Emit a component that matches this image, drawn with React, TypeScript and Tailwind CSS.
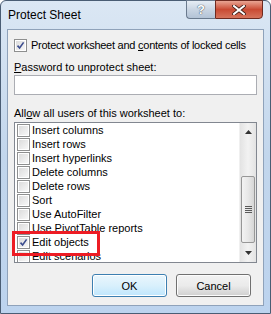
import React from 'react';

const items = [
  { label: 'Insert columns', checked: false },
  { label: 'Insert rows', checked: false },
  { label: 'Insert hyperlinks', checked: false },
  { label: 'Delete columns', checked: false },
  { label: 'Delete rows', checked: false },
  { label: 'Sort', checked: false },
  { label: 'Use AutoFilter', checked: false },
  { label: 'Use PivotTable reports', checked: false },
  { label: 'Edit objects', checked: true },
  { label: 'Edit scenarios', checked: false },
];

const CheckBox = ({ checked }: { checked: boolean }) => (
  <div className="w-[13px] h-[13px] shrink-0 border border-[#8e8f8f] bg-white p-[1px]">
    <div className="w-full h-full bg-gradient-to-br from-[#dcdcdc] to-[#f7f7f7] relative">
      {checked && (
        <svg viewBox="0 0 9 9" className="absolute inset-0 w-full h-full">
          <path d="M1.5 4.6 L3.6 7 L7.6 1.4" fill="none" stroke="#3b4c8e" strokeWidth="1.6" />
        </svg>
      )}
    </div>
  </div>
);

export default function App() {
  return (
    <div
      className="w-[271px] h-[314px] relative flex flex-col rounded-t-[6px] border border-[#4a5d74] bg-gradient-to-b from-[#dbe7f4] via-[#c2d6ec] to-[#bcd3ee] text-black"
      style={{ fontFamily: '"Liberation Sans", Arial, sans-serif' }}
    >
      {/* Title bar */}
      <div className="h-[28px] shrink-0 flex items-start justify-between pl-[7px] pr-[7px]">
        <span className="mt-[6px] text-[12px] leading-[16px]">Protect Sheet</span>
        <div className="flex -mt-[1px]">
          <div className="w-[29px] h-[19px] rounded-bl-[4px] border border-[#6a7a8e] border-r-0 bg-gradient-to-b from-[#e6edf5] via-[#c9d5e3] to-[#b3c3d6] flex items-center justify-center">
            <span className="text-[13px] font-bold text-white leading-none" style={{ textShadow: '0 0 1px #3d4b5c, 0 0 1px #3d4b5c' }}>?</span>
          </div>
          <div className="w-[48px] h-[19px] rounded-br-[4px] border border-[#6e2a20] bg-gradient-to-b from-[#e8a493] via-[#c94a33] to-[#d5735c] flex items-center justify-center">
            <svg viewBox="0 0 14 10" className="w-[14px] h-[10px]">
              <path d="M2 1 L12 9 M12 1 L2 9" stroke="#3a1a14" strokeWidth="3.6" strokeLinecap="square" />
              <path d="M2 1 L12 9 M12 1 L2 9" stroke="#ffffff" strokeWidth="2" strokeLinecap="square" />
            </svg>
          </div>
        </div>
      </div>

      {/* Client area */}
      <div className="flex-1 min-h-0 mx-[6px] mb-[7px] border border-[#8fa2ba] bg-[#f0f0f0] pt-[8px] px-[6px] flex flex-col text-[11px] leading-[14px]">
        <label className="flex items-center gap-[3px] whitespace-nowrap">
          <CheckBox checked />
          <span className="ml-[1px] tracking-[-0.25px]">
            Protect worksheet and <u>c</u>ontents of locked cells
          </span>
        </label>

        <div className="mt-[8px]">
          <u>P</u>assword to unprotect sheet:
        </div>
        <div className="mt-[1px] h-[20px] w-[243px] shrink-0 border border-[#abadb3] bg-white" />

        <div className="mt-[11px]">
          All<u>o</u>w all users of this worksheet to:
        </div>
        <div className="mt-[2px] w-[243px] h-[141px] shrink-0 border border-[#828790] bg-white flex">
          <div className="flex-1 flex flex-col pl-[2px] overflow-hidden">
            {items.map((item) => (
              <div key={item.label} className="h-[14px] flex items-center gap-[2px] shrink-0">
                <CheckBox checked={item.checked} />
                <span className="whitespace-nowrap">{item.label}</span>
              </div>
            ))}
          </div>
          {/* Scrollbar */}
          <div className="w-[17px] flex flex-col bg-gradient-to-r from-[#e3e3e3] via-[#f2f2f2] to-[#e3e3e3] border-l border-[#f0f0f0]">
            <div className="h-[17px] flex items-center justify-center">
              <svg viewBox="0 0 7 4" className="w-[7px] h-[4px]">
                <path d="M0 4 L3.5 0 L7 4 Z" fill="#333" />
              </svg>
            </div>
            <div className="h-[36px]" />
            <div className="h-[67px] mx-[1px] rounded-[2px] border border-[#979797] bg-gradient-to-r from-[#f3f3f3] via-[#e8e8e8] to-[#d6d6d6] flex flex-col items-center justify-center gap-[1px]">
              <div className="w-[7px] h-px bg-[#5a5a5a]" />
              <div className="w-[7px] h-px bg-[#5a5a5a]" />
              <div className="w-[7px] h-px bg-[#5a5a5a]" />
              <div className="w-[7px] h-px bg-[#5a5a5a]" />
            </div>
            <div className="flex-1 flex items-center justify-center">
              <svg viewBox="0 0 7 4" className="w-[7px] h-[4px]">
                <path d="M0 0 L3.5 4 L7 0 Z" fill="#333" />
              </svg>
            </div>
          </div>
        </div>

        <div className="mt-[11px] flex justify-end gap-[9px] pr-[6px]">
          <button className="w-[75px] h-[23px] rounded-[3px] border border-[#3c7fb1] bg-gradient-to-b from-[#eaf6fd] via-[#d9f0fc] to-[#bee6fd] shadow-[inset_0_0_0_1px_#fff] text-[11px]">
            OK
          </button>
          <button className="w-[75px] h-[23px] rounded-[3px] border border-[#707070] bg-gradient-to-b from-[#f2f2f2] via-[#ebebeb] to-[#cfcfcf] shadow-[inset_0_0_0_1px_#fcfcfc] text-[11px]">
            Cancel
          </button>
        </div>
      </div>

      {/* Highlight annotation */}
      <div className="absolute left-[11px] top-[230px] w-[88px] h-[25px] border-[3px] border-[#ed1c24] pointer-events-none" />
    </div>
  );
}
